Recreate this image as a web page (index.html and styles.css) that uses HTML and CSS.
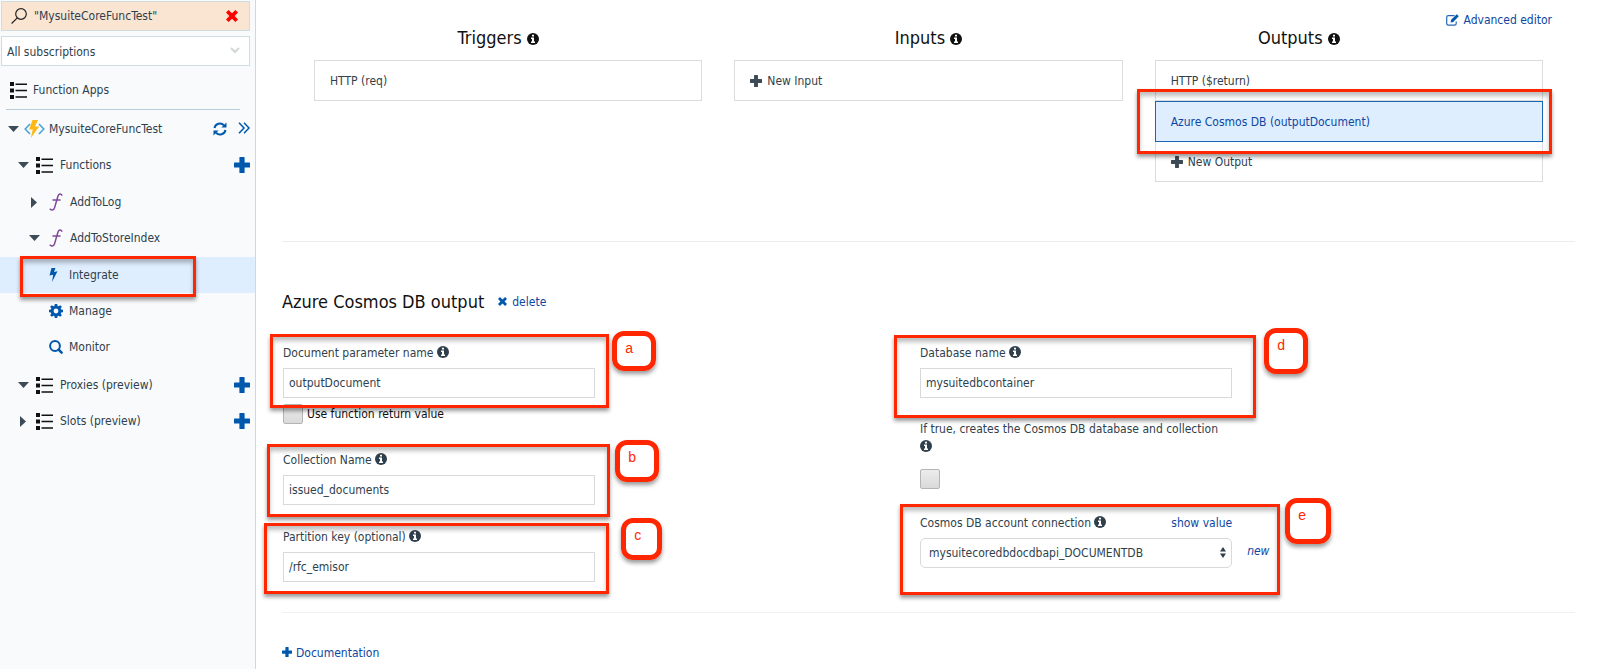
FILE: index.html
```html
<!DOCTYPE html>
<html lang="en">
<head>
<meta charset="utf-8">
<title>Function Apps - Integrate</title>
<link rel="stylesheet" href="styles.css">
</head>
<body>
<svg class="sprite" aria-hidden="true">
  <symbol id="list" viewBox="0 0 17 17"><path d="M0 0h4v4H0zM0 6.500h4v4H0zM0 13h4v4H0zM5.500 1.500H17v1.500H5.500zM5.500 7.800H17v1.500H5.500zM5.500 14.300H17v1.500H5.500z"/></symbol>
  <symbol id="plus" viewBox="0 0 16 16"><path d="M6 0h4q.6 0 .6.6v4.800h4.800q.6 0 .6.600v4q0 .6-.6.600h-4.800v4.800q0 .6-.6.600H6q-.6 0-.6-.6v-4.800H.6Q0 10.600 0 10V6q0-.6.6-.6h4.800V.6Q5.400 0 6 0z"/></symbol>
  <symbol id="info" viewBox="0 0 12 12"><circle cx="6" cy="6" r="6"/><path fill="#fff" d="M5 1.700h2v1.800H5zM4 4.600h3v3.800h1V10H4V8.400h1V6.100H4z"/></symbol>
  <symbol id="down" viewBox="0 0 11 6"><path d="M0 0h11L5.500 6z"/></symbol>
  <symbol id="right" viewBox="0 0 6 11"><path d="M0 0v11l6-5.500z"/></symbol>
  <symbol id="func" viewBox="0 0 14 18"><path fill="none" stroke="#804998" stroke-width="1.500" stroke-linecap="round" d="M12.800 2.200C12 .6 9.800.5 8.900 3.200L5.600 14.600C5 16.800 3.200 17.800 1.200 16.200M4 6.900h7"/></symbol>
  <symbol id="cross" viewBox="0 0 12 12"><path d="M2.600 0 6 3.300 9.400 0 12 2.600 8.700 6 12 9.400 9.400 12 6 8.700 2.600 12 0 9.400 3.300 6 0 2.600z"/></symbol>
</svg>
<div class="app">
  <nav class="sidebar">
    <div class="search">
      <svg class="search-icon" viewBox="0 0 16 16"><circle cx="10" cy="6" r="5.300"/><path d="M6.300 9.800.6 15.500"/></svg>
      <input type="text" aria-label="Search" value="&quot;MysuiteCoreFuncTest&quot;">
      <button type="button" aria-label="Clear search"><svg class="clear"><use href="#cross"/></svg></button>
    </div>
    <div class="subscription">
      <select aria-label="Subscriptions"><option>All subscriptions</option></select>
      <svg class="caret" viewBox="0 0 10 6"><path d="M1 1l4 4 4-4"/></svg>
    </div>
    <a class="all-apps" href="#"><svg class="list"><use href="#list"/></svg>Function Apps</a>
    <ul class="tree">
      <li>
        <div class="row level1">
          <svg class="down"><use href="#down"/></svg>
          <svg class="app-icon" viewBox="0 0 21 18"><path fill="none" stroke="#4ba3d8" stroke-width="1.600" d="M6 4 1.200 9 6 14M15 4l4.800 5-4.800 5"/><path fill="#fdb813" d="M8.500 0h5.500l-3 6.500h4.200L6.800 18l2-8.500H5z"/></svg>
          <a href="#">MysuiteCoreFuncTest</a>
          <button class="refresh" type="button" aria-label="Refresh"><svg viewBox="0 0 14 14"><path fill="none" stroke="#0058ad" stroke-width="2" d="M1.500 6A5.500 5.500 0 0 1 11 3.300M12.500 8A5.500 5.500 0 0 1 3 10.700"/><path fill="#0058ad" d="M13.500.6v5H8.400zM.5 13.400v-5h5.100z"/></svg></button>
          <button class="collapse" type="button" aria-label="Collapse"><svg viewBox="0 0 12 14"><path d="M1 .8 6 6 1 11.200M6 .8 11 6l-5 5.200"/></svg></button>
        </div>
        <ul>
          <li>
            <div class="row level2"><svg class="down"><use href="#down"/></svg><svg class="list"><use href="#list"/></svg><a href="#">Functions</a><button class="add" type="button" aria-label="Add function"><svg><use href="#plus"/></svg></button></div>
            <ul>
              <li><div class="row level3"><svg class="right"><use href="#right"/></svg><svg class="func"><use href="#func"/></svg><a href="#">AddToLog</a></div></li>
              <li>
                <div class="row level3"><svg class="down"><use href="#down"/></svg><svg class="func"><use href="#func"/></svg><a href="#">AddToStoreIndex</a></div>
                <ul>
                  <li><div class="row level4 selected"><svg viewBox="0 0 14 14"><path d="M2.500 0h4L5 4.100l3.500-.8L3 14l1.200-7.300L.5 7.600z"/></svg><a href="#">Integrate</a><span class="mark mark-integrate"></span></div></li>
                  <li><div class="row level4"><svg viewBox="0 0 14 14"><path fill-rule="evenodd" d="M5.800 0h2.400l.4 1.900 1 .4L11.200 1.200l1.600 1.600-1.100 1.600.4 1 1.900.4v2.400l-1.900.4-.4 1 1.100 1.600-1.600 1.600-1.600-1.100-1 .4-.4 1.900H5.800l-.4-1.900-1-.4-1.600 1.100-1.600-1.600 1.100-1.600-.4-1L0 8.200V5.800l1.900-.4.4-1-1.100-1.600 1.600-1.600 1.600 1.100 1-.4zM7 4.600a2.400 2.400 0 1 0 0 4.800 2.400 2.400 0 0 0 0-4.800z"/></svg><a href="#">Manage</a></div></li>
                  <li><div class="row level4"><svg viewBox="0 0 14 14"><g fill="none" stroke="#0058ad"><circle cx="6" cy="6" r="4.900" stroke-width="2"/><path stroke-width="2.600" stroke-linecap="round" d="m9.700 9.700 2.900 2.900"/></g></svg><a href="#">Monitor</a></div></li>
                </ul>
              </li>
            </ul>
          </li>
          <li><div class="row level2"><svg class="down"><use href="#down"/></svg><svg class="list"><use href="#list"/></svg><a href="#">Proxies (preview)</a><button class="add" type="button" aria-label="Add proxy"><svg><use href="#plus"/></svg></button></div></li>
          <li><div class="row level2"><svg class="right"><use href="#right"/></svg><svg class="list"><use href="#list"/></svg><a href="#">Slots (preview)</a><button class="add" type="button" aria-label="Add slot"><svg><use href="#plus"/></svg></button></div></li>
        </ul>
      </li>
    </ul>
  </nav>

  <main class="main">
    <div class="toolbar">
      <a href="#"><svg class="edit" viewBox="0 0 13 12"><path fill="none" stroke="#2467b8" stroke-width="1.200" d="M8.500 1.600H2.300Q.7 1.600.7 3.200v6.300q0 1.600 1.600 1.600h6.300q1.600 0 1.600-1.600V7.500"/><path fill="#0058ad" d="M10.800.2 12.800 2.200 7.200 7.900 4.600 8.400 5.100 5.800z"/></svg>Advanced editor</a>
    </div>
    <div class="bindings">
      <section class="triggers">
        <h2>Triggers <svg class="info"><use href="#info"/></svg></h2>
        <button class="item" type="button">HTTP (req)</button>
      </section>
      <section>
        <h2>Inputs <svg class="info"><use href="#info"/></svg></h2>
        <button class="item" type="button"><svg class="new"><use href="#plus"/></svg>New Input</button>
      </section>
      <section class="outputs">
        <h2>Outputs <svg class="info"><use href="#info"/></svg></h2>
        <button class="item" type="button">HTTP ($return)</button>
        <button class="item active" type="button">Azure Cosmos DB (outputDocument)<span class="mark mark-output"></span></button>
        <button class="item" type="button"><svg class="new"><use href="#plus"/></svg>New Output</button>
      </section>
    </div>

    <section class="panel">
      <div class="panel-title">
        <h2>Azure Cosmos DB output</h2>
        <a href="#"><svg class="delete"><use href="#cross"/></svg>delete</a>
      </div>
      <div class="form">
        <div class="column">
          <div class="field">
            <label for="param">Document parameter name <svg class="info"><use href="#info"/></svg></label>
            <input id="param" type="text" value="outputDocument">
            <span class="mark mark-a"></span><span class="badge badge-a">a</span>
          </div>
          <div class="check"><input id="ret" type="checkbox"><label for="ret">Use function return value</label></div>
          <div class="field collection">
            <label for="coll">Collection Name <svg class="info"><use href="#info"/></svg></label>
            <input id="coll" type="text" value="issued_documents">
            <span class="mark mark-b"></span><span class="badge badge-b">b</span>
          </div>
          <div class="field partition">
            <label for="part">Partition key (optional) <svg class="info"><use href="#info"/></svg></label>
            <input id="part" type="text" value="/rfc_emisor">
            <span class="mark mark-c"></span><span class="badge badge-c">c</span>
          </div>
        </div>
        <div class="column">
          <div class="field">
            <label for="db">Database name <svg class="info"><use href="#info"/></svg></label>
            <input id="db" type="text" value="mysuitedbcontainer">
            <span class="mark mark-d"></span><span class="badge badge-d">d</span>
          </div>
          <div class="create">
            <label for="create">If true, creates the Cosmos DB database and collection <svg class="info"><use href="#info"/></svg></label>
            <input id="create" type="checkbox">
          </div>
          <div class="field connection">
            <div class="label-row">
              <label for="conn">Cosmos DB account connection <svg class="info"><use href="#info"/></svg></label>
              <a href="#">show value</a>
            </div>
            <div class="select-box">
              <select id="conn"><option>mysuitecoredbdocdbapi_DOCUMENTDB</option></select>
              <svg class="sort" viewBox="0 0 6 11"><path d="M0 4.500 3 0l3 4.500zM0 6.500h6L3 11z"/></svg>
              <a class="new-link" href="#">new</a>
            </div>
            <span class="mark mark-e"></span><span class="badge badge-e">e</span>
          </div>
        </div>
      </div>
    </section>
    <a class="docs" href="#"><svg><use href="#plus"/></svg>Documentation</a>
  </main>
</div>
</body>
</html>
```
FILE: styles.css
```css
* { box-sizing: border-box; }

body {
  margin: 0;
  background: #fff;
  color: #2f3f4c;
  font: 12px/20px "DejaVu Sans Condensed", "Open Sans", sans-serif;
}

a { color: #0d47a1; text-decoration: none; }
h2 { margin: 0; font-weight: normal; font-size: 18px; color: #111; }
ul { margin: 0; padding: 0; list-style: none; }
svg { flex: none; fill: currentColor; }
button, input, select { font: inherit; color: inherit; }
button { padding: 0; border: 0; background: none; text-align: left; }

.sprite { display: none; }
.app { display: flex; min-height: 100vh; overflow: hidden; }

.sidebar {
  flex: none;
  width: 256px;
  padding-top: 1px;
  background: #f8fafc;
  border-right: 1px solid #cbdae2;
}

.search, .subscription {
  position: relative;
  display: flex;
  align-items: center;
  height: 30px;
  margin: 0 5px 5px 1px;
  border: 1px solid #cfdde2;
}
.search { background: #fae5d3; padding: 0 11px 0 9px; gap: 7px; }
.search input { flex: 1; min-width: 0; padding: 0; border: 0; background: none; }
.search-icon { width: 16px; height: 16px; fill: none; stroke: #222; stroke-width: 1.2; }
.clear { display: block; width: 12px; height: 12px; fill: #f00; }
.subscription { background: #fff; }
.subscription select {
  width: 100%;
  height: 100%;
  padding: 2px 5px 0;
  border: 0;
  background: none;
  appearance: none;
}
.caret { position: absolute; right: 9px; top: 10px; width: 10px; height: 6px; fill: none; stroke: #d0d5d8; stroke-width: 2; }

.all-apps {
  display: flex;
  align-items: center;
  gap: 6px;
  height: 39px;
  margin: 0 15px 0 6px;
  padding: 0 4px;
  border-bottom: 1px solid #b9ccd8;
  color: #2f3f4c;
}
.list { width: 17px; height: 17px; fill: #111; }

.tree { padding-top: 1px; }
.tree ul ul { padding: 1px 0; }
.row { position: relative; display: flex; align-items: center; height: 36px; padding-right: 5px; }
.row a { flex: 1; color: #2f3f4c; }
.row button svg { display: block; }
.down { width: 11px; height: 6px; margin-right: 7px; fill: #3d4b57; }
.right { width: 6px; height: 11px; margin: 0 10px 0 2px; fill: #3d4b57; }
.level1 { padding-left: 8px; }
.level1 .down { margin-right: 5px; }
.app-icon { width: 21px; height: 18px; margin-right: 4px; }
.refresh svg { width: 14px; height: 14px; }
.collapse { margin-left: 11px; }
.collapse svg { width: 12px; height: 14px; fill: none; stroke: #0058ad; stroke-width: 1.5; }
.level2 { padding-left: 18px; }
.level2 .list { margin-right: 7px; }
.add svg { width: 16px; height: 16px; fill: #0058ad; }
.level3 { padding-left: 29px; }
.func { width: 14px; height: 18px; margin: 0 7px 0 2px; }
.level4 { padding-left: 49px; gap: 6px; }
.level4 svg { width: 14px; height: 14px; fill: #0058ad; }
.selected { background: #dfeeff; }

.main { flex: 1; min-width: 0; padding: 10px 25px 0 26px; }
.toolbar { display: flex; justify-content: flex-end; padding-right: 23px; }
.edit { width: 13px; height: 12px; margin-right: 4px; vertical-align: -2px; }
.info { width: 12px; height: 12px; vertical-align: -1px; }

.bindings {
  display: grid;
  grid-template-columns: repeat(3, 1fr);
  gap: 32px;
  padding: 0 32px 59px;
  border-bottom: 1px solid #ececec;
}
.bindings h2 { margin-bottom: 14px; line-height: 16px; text-align: center; }
.triggers h2 { padding-right: 20px; }
.outputs h2 { padding-right: 100px; }
.item {
  position: relative;
  display: flex;
  align-items: center;
  width: 100%;
  height: 41px;
  padding: 0 15px;
  border: 1px solid #dcdcdc;
}
.active { z-index: 1; background: #dfeeff; border-color: #1a67b3; color: #0d47a1; }
.active + .item { margin-top: -1px; }
.new { width: 12px; height: 12px; margin-right: 5px; fill: #3d4b57; }

.panel { padding: 48px 18px 30px 0; border-bottom: 1px solid #f1f1f1; }
.panel-title { display: flex; align-items: center; gap: 14px; height: 24px; margin-bottom: 29px; }
.delete { width: 9px; height: 9px; margin-right: 5px; fill: #0058ad; }
.form { display: grid; grid-template-columns: 1fr 1fr; padding-left: 1px; }

.field { position: relative; width: 49%; }
.field label { display: block; }
.field > input, .select-box select {
  display: block;
  width: 100%;
  height: 30px;
  margin-top: 5px;
  padding: 0 5px;
  border: 1px solid #d9d9d9;
  background: #fff;
}
input[type="checkbox"] {
  appearance: none;
  width: 20px;
  height: 20px;
  margin: 0;
  border: 1px solid #b4b4b4;
  border-radius: 2px;
  background: linear-gradient(#ececec, #dadada);
}
.check { display: flex; gap: 4px; margin-top: 6px; color: #111; }
.collection { margin-top: 26px; }
.partition { margin-top: 22px; }
.create { width: 49%; margin-top: 22px; line-height: 18px; }
.create label { display: block; margin-bottom: 13px; }
.create input { display: block; }
.connection { margin-top: 24px; }
.label-row { display: flex; justify-content: space-between; }
.select-box { position: relative; }
.select-box select { appearance: none; padding: 0 8px; border-radius: 5px; }
.sort { position: absolute; right: 6px; top: 9px; width: 6px; height: 11px; }
.new-link { position: absolute; left: calc(100% + 15px); top: 3px; font-style: italic; }

.docs { display: inline-block; margin-top: 30px; }
.docs svg { width: 10px; height: 10px; margin-right: 4px; fill: #0058ad; }

/* Callouts drawn over the page */
.mark {
  position: absolute;
  z-index: 2;
  border: 3px solid #ff2600;
  box-shadow: 0 3px 4px rgba(0, 0, 0, .4), inset 0 4px 4px rgba(0, 0, 0, .25);
  pointer-events: none;
}
.mark-integrate { left: 20px; width: 176px; top: -1px; height: 41px; }
.mark-output { inset: -13px -10px -13px -19px; }
.mark-a { inset: -9px -14px -10px -13px; }
.mark-b { inset: -6px -15px -12px -16px; }
.mark-c { inset: -4px -14px -12px -19px; }
.mark-d { inset: -8px -24px -20px -26px; }
.mark-e { inset: -9px -48px -27px -20px; }

.badge {
  position: absolute;
  z-index: 2;
  width: 44px;
  height: 42px;
  padding: 2px 8px;
  border: 5px solid #ff2600;
  border-radius: 12px;
  box-shadow: 0 3px 4px rgba(0, 0, 0, .4);
  color: #ff2600;
  font: 14px/20px "Liberation Sans", sans-serif;
}
.badge-a { left: calc(100% + 17px); top: -12px; height: 40px; }
.badge-b { left: calc(100% + 20px); top: -10px; }
.badge-c { left: calc(100% + 26px); top: -9px; width: 41px; }
.badge-d { left: calc(100% + 32px); top: -15px; height: 46px; }
.badge-e { left: calc(100% + 53px); top: -15px; width: 46px; height: 46px; }
```
